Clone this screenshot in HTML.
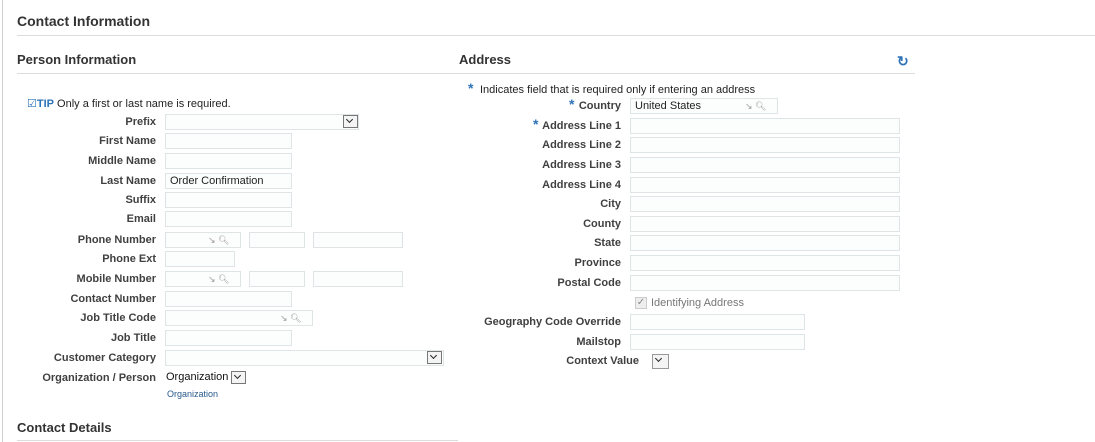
<!DOCTYPE html>
<html><head><style>
body{margin:0;width:1095px;height:442px;background:#fff;font-family:"Liberation Sans",Arial,sans-serif;position:relative;overflow:hidden}
.a{position:absolute}
.h1{font-size:14px;font-weight:bold;color:#333}
.h2{font-size:13px;font-weight:bold;color:#333}
.ln{position:absolute;height:1px;background:#d9dde0}
.l{position:absolute;font-size:11px;font-weight:bold;color:#404040;text-align:right;white-space:nowrap;line-height:13px}
.i{position:absolute;height:16px;border:1px solid #dfe4e7;background:#fcfdfd;box-sizing:border-box;font-size:11px;color:#222;padding-left:4px;line-height:15px}
.dd{position:absolute;width:15px;height:13px;border:1px solid #777;box-sizing:border-box;background:#f4f4f4}
.dd:after{content:"";position:absolute;left:3px;top:1px;width:4px;height:4px;border-right:1.5px solid #222;border-bottom:1.5px solid #222;transform:rotate(45deg)}
.lv{position:absolute;font-size:9px;color:#999}
.star{position:absolute;color:#2e73b8;font-size:14px;font-weight:bold;line-height:14px}
</style></head><body>
<div class="a" style="left:2px;top:0;width:1px;height:442px;background:#d0d0d0"></div>
<div class="a h1" style="left:17px;top:13px">Contact Information</div>
<div class="ln" style="left:17px;top:35px;width:1078px"></div>
<div class="a h2" style="left:17px;top:52px">Person Information</div>
<div class="ln" style="left:17px;top:73px;width:433px"></div>
<div class="a h2" style="left:459px;top:52px">Address</div>
<div class="ln" style="left:450px;top:73px;width:465px"></div>
<div class="a" style="left:897px;top:53px;color:#2e73b8;font-size:14px;font-weight:bold">↻</div>
<div class="a" style="left:27px;top:97px;font-size:11px;color:#222"><span style="color:#2e73b8">☑</span><span style="color:#2e73b8;font-weight:bold">TIP</span> Only a first or last name is required.</div>

<div class="l" style="right:939px;top:116px">Prefix</div>
<div class="i" style="left:165px;top:114px;width:194px"></div><div class="dd" style="left:343px;top:115px"></div>
<div class="l" style="right:939px;top:135px">First Name</div><div class="i" style="left:165px;top:133px;width:127px"></div>
<div class="l" style="right:939px;top:155px">Middle Name</div><div class="i" style="left:165px;top:153px;width:127px"></div>
<div class="l" style="right:939px;top:175px">Last Name</div><div class="i" style="left:165px;top:173px;width:127px">Order Confirmation</div>
<div class="l" style="right:939px;top:194px">Suffix</div><div class="i" style="left:165px;top:192px;width:127px"></div>
<div class="l" style="right:939px;top:213px">Email</div><div class="i" style="left:165px;top:211px;width:127px"></div>
<div class="l" style="right:939px;top:234px">Phone Number</div>
<div class="i" style="left:165px;top:232px;width:76px"></div><span class="lv" style="left:208px;top:235px">↘ 🔍︎</span>
<div class="i" style="left:249px;top:232px;width:56px"></div><div class="i" style="left:313px;top:232px;width:90px"></div>
<div class="l" style="right:939px;top:253px">Phone Ext</div><div class="i" style="left:165px;top:251px;width:70px"></div>
<div class="l" style="right:939px;top:273px">Mobile Number</div>
<div class="i" style="left:165px;top:271px;width:76px"></div><span class="lv" style="left:208px;top:274px">↘ 🔍︎</span>
<div class="i" style="left:249px;top:271px;width:56px"></div><div class="i" style="left:313px;top:271px;width:90px"></div>
<div class="l" style="right:939px;top:293px">Contact Number</div><div class="i" style="left:165px;top:291px;width:127px"></div>
<div class="l" style="right:939px;top:312px">Job Title Code</div>
<div class="i" style="left:165px;top:310px;width:148px"></div><span class="lv" style="left:280px;top:313px">↘ 🔍︎</span>
<div class="l" style="right:939px;top:332px">Job Title</div><div class="i" style="left:165px;top:330px;width:127px"></div>
<div class="l" style="right:939px;top:352px">Customer Category</div>
<div class="i" style="left:165px;top:350px;width:279px"></div><div class="dd" style="left:427px;top:351px"></div>
<div class="l" style="right:939px;top:372px">Organization / Person</div>
<div class="a" style="left:166px;top:371px;font-size:11px;color:#111">Organization</div><div class="dd" style="left:231px;top:371px"></div>
<div class="a" style="left:167px;top:389px;font-size:9px;color:#2a5a8c">Organization</div>
<div class="a h2" style="left:17px;top:420px">Contact Details</div>
<div class="ln" style="left:17px;top:440px;width:441px"></div>

<div class="star" style="left:468px;top:81px">*</div>
<div class="a" style="left:480px;top:84px;font-size:11px;color:#222">Indicates field that is required only if entering an address</div>
<div class="star" style="left:569px;top:97px">*</div>
<div class="l" style="right:474px;top:100px">Country</div>
<div class="i" style="left:630px;top:98px;width:148px">United States</div><span class="lv" style="left:745px;top:101px">↘ 🔍︎</span>
<div class="star" style="left:533px;top:117px">*</div>
<div class="l" style="right:474px;top:120px">Address Line 1</div><div class="i" style="left:630px;top:118px;width:270px"></div>
<div class="l" style="right:474px;top:139px">Address Line 2</div><div class="i" style="left:630px;top:137px;width:270px"></div>
<div class="l" style="right:474px;top:159px">Address Line 3</div><div class="i" style="left:630px;top:157px;width:270px"></div>
<div class="l" style="right:474px;top:179px">Address Line 4</div><div class="i" style="left:630px;top:177px;width:270px"></div>
<div class="l" style="right:474px;top:198px">City</div><div class="i" style="left:630px;top:196px;width:270px"></div>
<div class="l" style="right:474px;top:218px">County</div><div class="i" style="left:630px;top:216px;width:270px"></div>
<div class="l" style="right:474px;top:237px">State</div><div class="i" style="left:630px;top:235px;width:270px"></div>
<div class="l" style="right:474px;top:257px">Province</div><div class="i" style="left:630px;top:255px;width:270px"></div>
<div class="l" style="right:474px;top:277px">Postal Code</div><div class="i" style="left:630px;top:275px;width:270px"></div>
<div class="a" style="left:635px;top:297px;width:12px;height:12px;border:1px solid #ccc;box-sizing:border-box;background:#eee;color:#888;font-size:10px;line-height:10px;text-align:center">✓</div>
<div class="a" style="left:651px;top:297px;font-size:11px;color:#777">Identifying Address</div>
<div class="l" style="right:474px;top:316px">Geography Code Override</div><div class="i" style="left:630px;top:314px;width:175px"></div>
<div class="l" style="right:474px;top:336px">Mailstop</div><div class="i" style="left:630px;top:334px;width:175px"></div>
<div class="l" style="right:456px;top:355px">Context Value</div>
<div class="dd" style="left:652px;top:354px;width:17px;height:15px;border-color:#999"></div>
</body></html>
